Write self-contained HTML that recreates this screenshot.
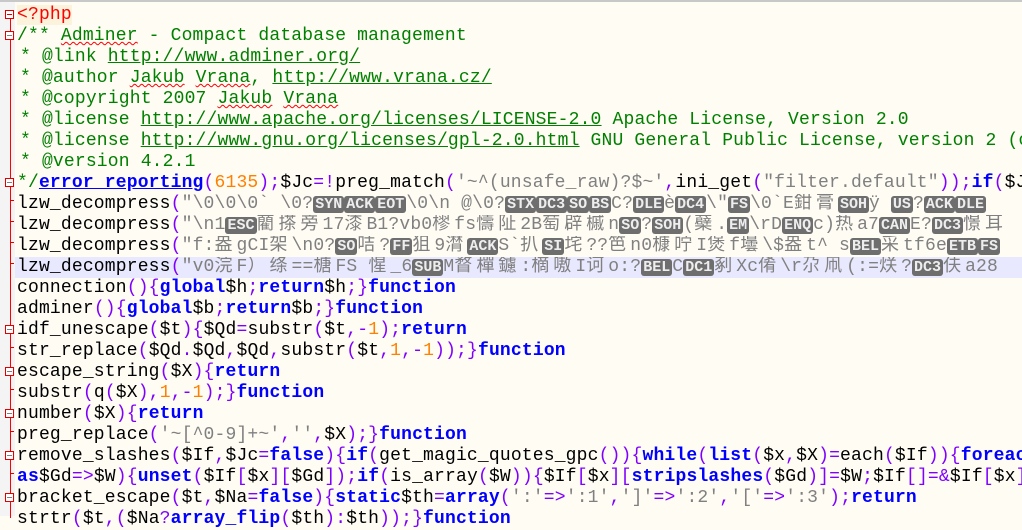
<!DOCTYPE html>
<html><head><meta charset="utf-8"><style>
html,body{margin:0;padding:0;width:1022px;height:516px;overflow:hidden;background:#fffcf4;}
.top{position:absolute;left:0;top:0;width:1022px;height:2px;background:#c8c8c8;}
.gut{position:absolute;left:0;top:2px;width:15px;height:514px;background:#f4f4f4;}
.rl{position:absolute;left:10px;top:18px;width:1px;height:500px;background:#ff0000;}
.box{position:absolute;left:5px;width:9px;height:9px;border:1px solid #e00000;background:#fff;box-sizing:border-box;}
.box:after{content:"";position:absolute;left:1px;top:3px;width:5px;height:1px;background:#808080;}
.box.r:after{background:#e00000;}
.tk{position:absolute;left:10px;width:4px;height:1px;background:#e00000;}
.ln{position:absolute;left:17px;width:1010px;height:21px;line-height:21px;white-space:pre;font-family:"Liberation Mono","Noto Sans CJK SC",monospace;font-size:18px;letter-spacing:0.17px;color:#000;overflow:hidden;}
.hl{background:#e8e8ff;left:15px;padding-left:2px;}
.k{color:#0000ff;font-weight:bold}
.p{color:#8000ff}
.s{color:#808080}
.n{color:#ff8000}
.c{color:#008000}
.u{color:#008000;text-decoration:underline}
.w{text-decoration:underline wavy #ff0000;text-decoration-thickness:1px}
.r{color:#ff0000}
.x{background:#6e6e6e;color:#eee;font-size:15px;font-weight:bold;border-radius:3px;padding:0 2px;letter-spacing:0}
i{font-style:normal;letter-spacing:4px}
.cm{padding-left:3px}
</style></head><body>
<div class="top"></div>
<div class="gut"></div>
<div class="rl"></div>
<div class="box r" style="top:10px"></div>
<div class="box" style="top:31px"></div>
<div class="box" style="top:178px"></div>
<div class="tk" style="top:200px"></div><div class="tk" style="top:221px"></div><div class="tk" style="top:242px"></div><div class="tk" style="top:263px"></div>
<div class="box" style="top:325px"></div><div class="tk" style="top:347px"></div>
<div class="box" style="top:367px"></div><div class="tk" style="top:389px"></div>
<div class="box" style="top:409px"></div><div class="tk" style="top:431px"></div>
<div class="box" style="top:451px"></div><div class="tk" style="top:473px"></div>
<div class="box" style="top:493px"></div>

<div class="ln" style="top:5px"><span class="r" style="background:#fbf3dc">&lt;?php</span></div>
<div class="ln c" style="top:26px">/** <span class="w">Adminer</span> - Compact database management</div>
<div class="ln c cm" style="top:47px">* @link <span class="u">http://www.adminer.org/</span></div>
<div class="ln c cm" style="top:68px">* @author <span class="w">Jakub</span> <span class="w">Vrana</span>, <span class="u">http://www.vrana.cz/</span></div>
<div class="ln c cm" style="top:89px">* @copyright 2007 <span class="w">Jakub</span> <span class="w">Vrana</span></div>
<div class="ln c cm" style="top:110px">* @license <span class="u">http://www.apache.org/licenses/LICENSE-2.0</span> Apache License, Version 2.0</div>
<div class="ln c cm" style="top:131px">* @license <span class="u">http://www.gnu.org/licenses/gpl-2.0.html</span> GNU General Public License, version 2 (one</div>
<div class="ln c cm" style="top:152px">* @version 4.2.1</div>
<div class="ln" style="top:173px"><span class="c">*/</span><span class="k" style="text-decoration:underline">error_reporting</span><span class="p">(</span><span class="n">6135</span><span class="p">);</span>$Jc<span class="p">=!</span>preg_match<span class="p">(</span><span class="s">'~^(unsafe_raw)?$~'</span><span class="p">,</span>ini_get<span class="p">(</span><span class="s">"filter.default"</span><span class="p">));</span><span class="k">if</span><span class="p">(</span>$J</div>
<div class="ln" style="top:194px">lzw_decompress<span class="p">(</span><span class="s">"\0\0\0` \0?<span class="x">SYN</span><span class="x">ACK</span><span class="x">EOT</span>\0\n @\0?<span class="x">STX</span><span class="x">DC3</span><span class="x">SO</span><span class="x">BS</span>C?<span class="x">DLE</span>è<span class="x">DC4</span>\"<span class="x">FS</span>\0`E<i>鉗膏</i><span class="x">SOH</span>ÿ <span class="x">US</span>?<span class="x">ACK</span><span class="x">DLE</span></span></div>
<div class="ln" style="top:215px">lzw_decompress<span class="p">(</span><span class="s">"\n1<span class="x">ESC</span><i>藺搽旁</i>17<i>漆</i>B1?vb0<i>樛</i>fs<i>懤阯</i>2B<i>萄辟槭</i>n<span class="x">SO</span>?<span class="x">SOH</span>(<i>蘗</i>.<span class="x">EM</span>\rD<span class="x">ENQ</span>c)<i>热</i>a7<span class="x">CAN</span>E?<span class="x">DC3</span><i>憬耳</i></span></div>
<div class="ln" style="top:236px">lzw_decompress<span class="p">(</span><span class="s">"f:<i>盎</i>gCI<i>架</i>\n0?<span class="x">SO</span><i>咭</i>?<span class="x">FF</span><i>狙</i>9<i>潸</i><span class="x">ACK</span>S`<i>扒</i><span class="x">SI</span><i>垞</i>??<i>笆</i>n0<i>槺咛</i>I<i>煲</i>f<i>壜</i>\$<i>盎</i>t^ s<span class="x">BEL</span><i>采</i>tf6e<span class="x">ETB</span><span class="x">FS</span></span></div>
<div class="ln hl" style="top:257px">lzw_decompress<span class="p">(</span><span class="s">"v0<i>浣</i>F<i>）</i><i>绦</i>==<i>榶</i>FS <i>惺</i>_6<span class="x">SUB</span>M<i>瞀樿鑢</i>:<i>樀嗷</i>I<i>诃</i>o:?<span class="x">BEL</span>C<span class="x">DC1</span><i>剢</i>Xc<i>倄</i>\r<i>尕凧</i>(:=<i>烪</i>?<span class="x">DC3</span><i>伕</i>a28</span></div>
<div class="ln" style="top:278px">connection<span class="p">(){</span><span class="k">global</span>$h<span class="p">;</span><span class="k">return</span>$h<span class="p">;}</span><span class="k">function</span></div>
<div class="ln" style="top:299px">adminer<span class="p">(){</span><span class="k">global</span>$b<span class="p">;</span><span class="k">return</span>$b<span class="p">;}</span><span class="k">function</span></div>
<div class="ln" style="top:320px">idf_unescape<span class="p">(</span>$t<span class="p">){</span>$Qd<span class="p">=</span>substr<span class="p">(</span>$t<span class="p">,-</span><span class="n">1</span><span class="p">);</span><span class="k">return</span></div>
<div class="ln" style="top:341px">str_replace<span class="p">(</span>$Qd<span class="p">.</span>$Qd<span class="p">,</span>$Qd<span class="p">,</span>substr<span class="p">(</span>$t<span class="p">,</span><span class="n">1</span><span class="p">,-</span><span class="n">1</span><span class="p">));}</span><span class="k">function</span></div>
<div class="ln" style="top:362px">escape_string<span class="p">(</span>$X<span class="p">){</span><span class="k">return</span></div>
<div class="ln" style="top:383px">substr<span class="p">(</span>q<span class="p">(</span>$X<span class="p">),</span><span class="n">1</span><span class="p">,-</span><span class="n">1</span><span class="p">);}</span><span class="k">function</span></div>
<div class="ln" style="top:404px">number<span class="p">(</span>$X<span class="p">){</span><span class="k">return</span></div>
<div class="ln" style="top:425px">preg_replace<span class="p">(</span><span class="s">'~[^0-9]+~'</span><span class="p">,</span><span class="s">''</span><span class="p">,</span>$X<span class="p">);}</span><span class="k">function</span></div>
<div class="ln" style="top:446px">remove_slashes<span class="p">(</span>$If<span class="p">,</span>$Jc<span class="p">=</span><span class="k">false</span><span class="p">){</span><span class="k">if</span><span class="p">(</span>get_magic_quotes_gpc<span class="p">()){</span><span class="k">while</span><span class="p">(</span><span class="k">list</span><span class="p">(</span>$x<span class="p">,</span>$X<span class="p">)=</span>each<span class="p">(</span>$If<span class="p">)){</span><span class="k">foreach</span></div>
<div class="ln" style="top:467px"><span class="k">as</span>$Gd<span class="p">=&gt;</span>$W<span class="p">){</span><span class="k">unset</span><span class="p">(</span>$If<span class="p">[</span>$x<span class="p">][</span>$Gd<span class="p">]);</span><span class="k">if</span><span class="p">(</span>is_array<span class="p">(</span>$W<span class="p">)){</span>$If<span class="p">[</span>$x<span class="p">][</span><span class="k">stripslashes</span><span class="p">(</span>$Gd<span class="p">)]=</span>$W<span class="p">;</span>$If<span class="p">[]=&amp;</span>$If<span class="p">[</span>$x<span class="p">]</span></div>
<div class="ln" style="top:488px">bracket_escape<span class="p">(</span>$t<span class="p">,</span>$Na<span class="p">=</span><span class="k">false</span><span class="p">){</span><span class="k">static</span>$th<span class="p">=</span><span class="k">array</span><span class="p">(</span><span class="s">':'</span><span class="p">=&gt;</span><span class="s">':1'</span><span class="p">,</span><span class="s">']'</span><span class="p">=&gt;</span><span class="s">':2'</span><span class="p">,</span><span class="s">'['</span><span class="p">=&gt;</span><span class="s">':3'</span><span class="p">);</span><span class="k">return</span></div>
<div class="ln" style="top:509px">strtr<span class="p">(</span>$t<span class="p">,(</span>$Na<span class="p">?</span><span class="k">array_flip</span><span class="p">(</span>$th<span class="p">):</span>$th<span class="p">));}</span><span class="k">function</span></div>
</body></html>
